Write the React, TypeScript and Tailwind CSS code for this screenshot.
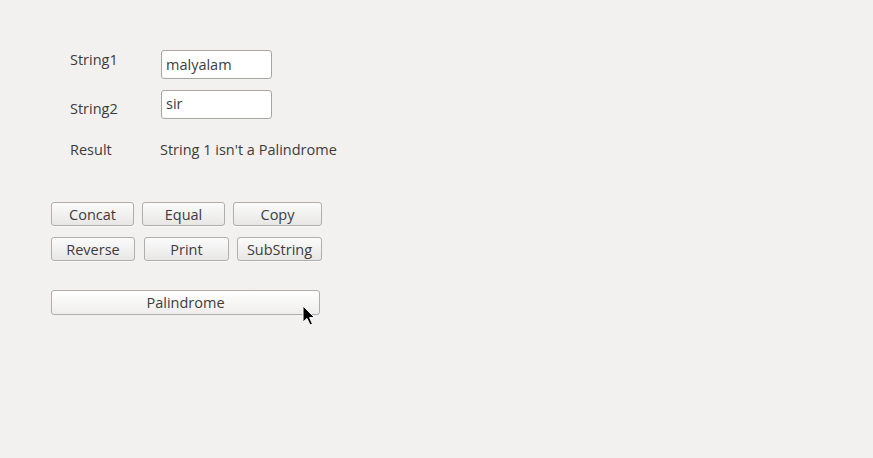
import React from "react";

const font = { fontFamily: '"Open Sans", "DejaVu Sans", sans-serif' };

function Btn({ label, w }: { label: string; w: string }) {
  return (
    <button
      className={`${w} block h-[24px] pt-[2px] rounded-[3px] border border-[#b0aeab] bg-gradient-to-b from-[#fbfbfb] to-[#e8e7e6] text-[14.5px] leading-none text-[#3c3c3c] shadow-[0_1px_0_rgba(255,255,255,0.6)]`}
    >
      {label}
    </button>
  );
}

export default function App() {
  return (
    <div className="relative w-[873px] h-[458px] bg-[#f2f1f0] text-[#3c3c3c]" style={font}>
      <div className="pl-[51px] pt-[50px]">
        {/* champs */}
        <div className="pl-[19px]">
          <div className="flex">
            <div className="w-[91px] text-[14.5px] leading-[20px]">String1</div>
            <input
              readOnly
              value="malyalam"
              className="w-[111px] h-[29px] rounded-[3px] border border-[#a8a6a3] bg-white pl-[4px] text-[14.5px] text-[#3c3c3c] outline-none"
            />
          </div>
          <div className="flex mt-[11px] h-[29px]">
            <div className="w-[91px] pt-[9px] text-[14.5px] leading-[20px]">String2</div>
            <input
              readOnly
              value="sir"
              className="w-[111px] h-[29px] rounded-[3px] border border-[#a8a6a3] bg-white pl-[4px] pb-[3px] text-[14.5px] text-[#3c3c3c] outline-none"
            />
          </div>
          <div className="flex mt-[21px] text-[14.5px] leading-[20px]">
            <div className="w-[90px]">Result</div>
            <div>String 1 isn't a Palindrome</div>
          </div>
        </div>

        {/* boutons */}
        <div className="flex gap-[8px] mt-[42px]">
          <Btn label="Concat" w="w-[83px]" />
          <Btn label="Equal" w="w-[83px]" />
          <Btn label="Copy" w="w-[89px]" />
        </div>
        <div className="flex mt-[11px]">
          <Btn label="Reverse" w="w-[84px]" />
          <div className="ml-[9px]">
            <Btn label="Print" w="w-[85px]" />
          </div>
          <div className="ml-[8px]">
            <Btn label="SubString" w="w-[85px]" />
          </div>
        </div>
        <div className="flex mt-[29px]">
          <button className="block w-[269px] h-[25px] pt-[1px] rounded-[3px] border border-[#b0aeab] bg-gradient-to-b from-[#ffffff] to-[#efeeed] text-[14.5px] leading-none text-[#3c3c3c]">
            Palindrome
          </button>
        </div>
      </div>

      {/* curseur */}
      <svg className="absolute left-[302px] top-[305px]" width="14" height="22" viewBox="0 0 14 22">
        <path
          d="M1 1 L1 17 L5 13.5 L8 20 L10.5 19 L7.6 12.6 L12.5 12.6 Z"
          fill="#000"
          stroke="#fff"
          strokeWidth="1"
          strokeLinejoin="round"
        />
      </svg>
    </div>
  );
}
